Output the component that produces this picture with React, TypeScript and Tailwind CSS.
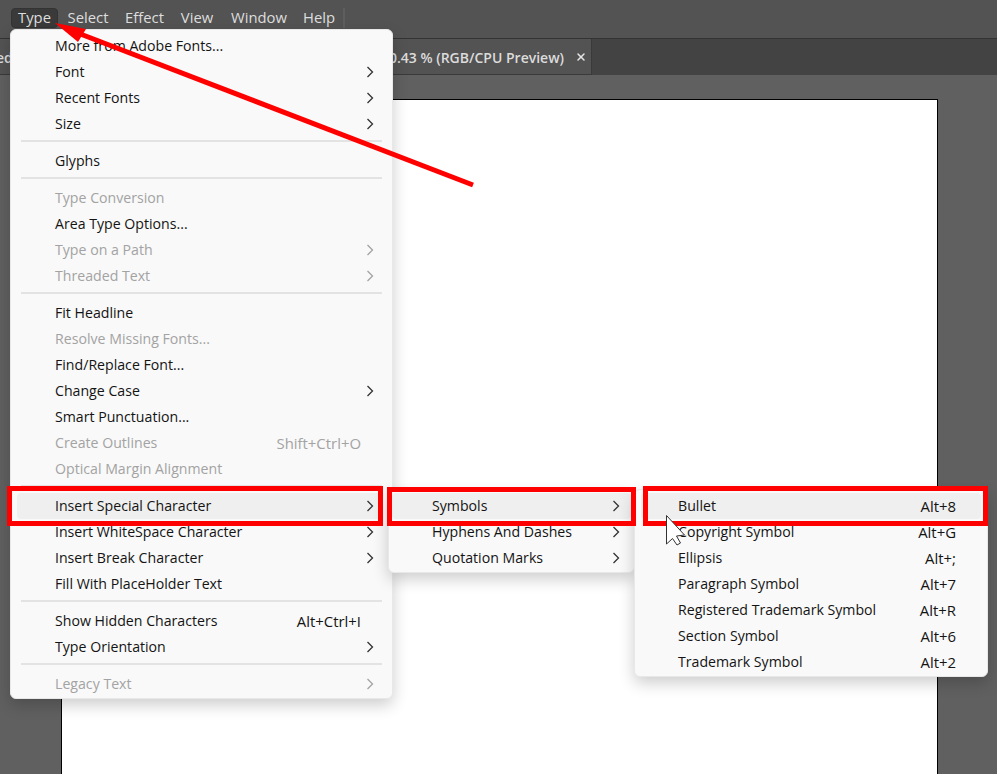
import React from 'react';
import {X} from 'lucide-react';

type Item = {
    label?: string;
    shortcut?: string;
    sub?: boolean;
    off?: boolean;
    active?: boolean;
    sep?: boolean;
};

const typeMenu: Item[] = [
    {label: 'More from Adobe Fonts...'},
    {label: 'Font', sub: true},
    {label: 'Recent Fonts', sub: true},
    {label: 'Size', sub: true},
    {sep: true},
    {label: 'Glyphs'},
    {sep: true},
    {label: 'Type Conversion', off: true},
    {label: 'Area Type Options...'},
    {label: 'Type on a Path', sub: true, off: true},
    {label: 'Threaded Text', sub: true, off: true},
    {sep: true},
    {label: 'Fit Headline'},
    {label: 'Resolve Missing Fonts...', off: true},
    {label: 'Find/Replace Font...'},
    {label: 'Change Case', sub: true},
    {label: 'Smart Punctuation...'},
    {label: 'Create Outlines', shortcut: 'Shift+Ctrl+O', off: true},
    {label: 'Optical Margin Alignment', off: true},
    {sep: true},
    {label: 'Insert Special Character', sub: true, active: true},
    {label: 'Insert WhiteSpace Character', sub: true},
    {label: 'Insert Break Character', sub: true},
    {label: 'Fill With PlaceHolder Text'},
    {sep: true},
    {label: 'Show Hidden Characters', shortcut: 'Alt+Ctrl+I'},
    {label: 'Type Orientation', sub: true},
    {sep: true},
    {label: 'Legacy Text', sub: true, off: true},
];

const specialMenu: Item[] = [
    {label: 'Symbols', sub: true, active: true},
    {label: 'Hyphens And Dashes', sub: true},
    {label: 'Quotation Marks', sub: true},
];

const symbolsMenu: Item[] = [
    {label: 'Bullet', shortcut: 'Alt+8', active: true},
    {label: 'Copyright Symbol', shortcut: 'Alt+G'},
    {label: 'Ellipsis', shortcut: 'Alt+;'},
    {label: 'Paragraph Symbol', shortcut: 'Alt+7'},
    {label: 'Registered Trademark Symbol', shortcut: 'Alt+R'},
    {label: 'Section Symbol', shortcut: 'Alt+6'},
    {label: 'Trademark Symbol', shortcut: 'Alt+2'},
];

const menuBar = [
    {label: 'Type', cls: 'w-[47px] ml-[11px] bg-[#3a3a3a] border border-[#333]'},
    {label: 'Select', cls: 'w-[54px] ml-[3px]'},
    {label: 'Effect', cls: 'w-[51px] ml-[4px]'},
    {label: 'View', cls: 'w-[42px] ml-[6px]'},
    {label: 'Window', cls: 'w-[64px] ml-[9px]'},
    {label: 'Help', cls: 'w-[42px] ml-[7px]'},
];

function Chevron({off}: {off?: boolean}) {
    return (
        <svg width="8" height="12" viewBox="0 0 8 12" fill="none" className="shrink-0">
            <path d="M1.5 1 L6.5 6 L1.5 11" stroke={off ? '#a3a3a3' : '#333333'} strokeWidth="1.3"/>
        </svg>
    );
}

function MenuRow({item, rowClass, shortcutClass}: {item: Item; rowClass: string; shortcutClass: string}) {
    return (
        <div
            className={`flex h-[26px] items-center justify-between rounded ${rowClass} ${
                item.active ? 'bg-[#efefef]' : ''
            } ${item.off ? 'text-[#a3a3a3]' : 'text-[#141414]'}`}
        >
            <span>{item.label}</span>
            {item.shortcut && <span className={`text-[14.9px] ${shortcutClass}`}>{item.shortcut}</span>}
            {item.sub && <Chevron off={item.off}/>}
        </div>
    );
}

function Menu({items, className, rowClass, shortcutClass = ''}: {items: Item[]; className: string; rowClass: string; shortcutClass?: string}) {
    return (
        <div
            className={`absolute rounded-md border border-[#e8e8e8] bg-[#f9f9f9] text-[14.15px] shadow-[0_6px_16px_rgba(0,0,0,0.2)] ${className}`}
        >
            {items.map((item, i) =>
                item.sep ? (
                    <div key={i} className="mx-[10px] mt-[3px] mb-[6px] h-[2px] bg-[#e3e3e3]"/>
                ) : (
                    <MenuRow key={i} item={item} rowClass={rowClass} shortcutClass={shortcutClass}/>
                ),
            )}
        </div>
    );
}

export default function App() {
    return (
        <div className="relative flex h-[774px] w-[997px] flex-col overflow-hidden bg-[#606060] font-['Open_Sans','Noto_Sans',sans-serif]">
            <div className="flex h-[38px] shrink-0 items-center bg-[#535353] pb-[3px] text-[14.8px] text-[#dedede]">
                {menuBar.map((m) => (
                    <div key={m.label} className={`flex h-[20px] items-center justify-center rounded-sm ${m.cls}`}>
                        {m.label}
                    </div>
                ))}
                <div className="ml-[3px] h-[20px] w-[2px] bg-[#5e5e5e]"/>
            </div>

            <div className="flex h-[37px] shrink-0 items-stretch border-t border-[#333] bg-[#434343] text-[14px] font-semibold text-[#dcdcdc]">
                <div className="flex w-[592px] items-center justify-between overflow-hidden whitespace-nowrap border-r border-b border-[#3a3a3a] bg-[#535353] pt-[1px] pr-[4px]">
                    <span className="-ml-[4px]">ed</span>
                    <div className="flex items-center gap-[11px]">
                        <span>20.43 % (RGB/CPU Preview)</span>
                        <X size={12} strokeWidth={3} className="text-[#e6e6e6]"/>
                    </div>
                </div>
            </div>

            <div className="flex flex-1 justify-start pl-[61px] pt-[24px]">
                <div className="w-[877px] border border-b-0 border-black bg-white"/>
            </div>

            <Menu
                items={typeMenu}
                className="left-[10px] top-[29px] w-[383px] pt-[3px] pb-[1px]"
                rowClass="ml-[6px] mr-[10px] pl-[38px] pr-[8px]"
                shortcutClass="mr-[13px]"
            />
            <Menu
                items={specialMenu}
                className="left-[388px] top-[489px] h-[84px] w-[247px] pt-[3px]"
                rowClass="ml-[3px] mr-[3px] pl-[40px] pr-[11px]"
            />
            <Menu
                items={symbolsMenu}
                className="left-[634px] top-[489px] h-[188px] w-[354px] pt-[3px]"
                rowClass="ml-[6px] mr-[6px] pl-[37px] pr-[25px]"
            />

            {/* annotation boxes */}
            <div className="absolute left-[7px] top-[486px] h-[40px] w-[376px] border-[5px] border-[#ff0000]"/>
            <div className="absolute left-[387px] top-[487px] h-[39px] w-[249px] border-[5px] border-[#ff0000]"/>
            <div className="absolute left-[643px] top-[486px] h-[40px] w-[345px] border-[5px] border-[#ff0000]"/>

            {/* arrow and pointer */}
            <svg className="absolute left-0 top-0" width="997" height="774" viewBox="0 0 997 774" fill="none">
                <path d="M473 185 L70 30" stroke="#ff0000" strokeWidth="5"/>
                <path d="M55 23 L86 29 L78 42 Z" fill="#ff0000"/>
                <path
                    d="M666.5 515.5 V544 L672.5 538.5 L677 545 L680.5 543 L676.5 536 L684.5 535 Z"
                    fill="#ffffff"
                    stroke="#333333"
                    strokeWidth="1"
                />
            </svg>
        </div>
    );
}
